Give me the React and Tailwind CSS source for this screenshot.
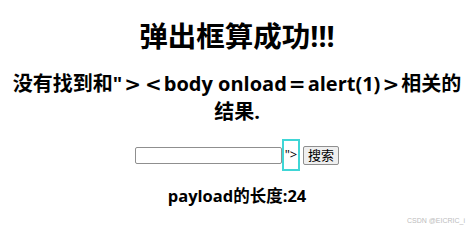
const Sym = ({ children }) => (
  <span className="px-[2px]" style={{ fontFamily: '"DejaVu Sans", sans-serif' }}>
    {children}
  </span>
);

export default function App() {
  const font = { fontFamily: '"Open Sans", "Noto Sans CJK SC", sans-serif' };
  return (
    <div className="w-[474px] h-[230px] bg-white text-black relative overflow-hidden" style={font}>
      <div className="flex flex-col items-center">
        <h1 className="mt-[17px] text-[28.5px] leading-[38px] font-bold">弹出框算成功!!!</h1>
        <h2 className="mt-[15px] w-[474px] text-[20px] leading-[27px] font-bold text-center whitespace-nowrap">
          没有找到和"<Sym>&gt;</Sym><Sym>&lt;</Sym>body onload<Sym>=</Sym>alert(1)<Sym>&gt;</Sym>相关的
          <br />
          结果.
        </h2>
        <div className="mt-[14px] flex items-center">
          <input
            type="text"
            className="w-[147px] h-[17px] border border-[#8f8f8f] rounded-[2px] bg-white"
          />
          <div className="w-[18px] h-[32px] border-2 border-[#3fd6d6] flex items-center justify-center text-[13px]">
            "&gt;
          </div>
          <button className="ml-[3px] w-[36px] h-[19px] border border-[#8f8f8f] rounded-[2px] bg-[#efefef] text-[13px] leading-none">
            搜索
          </button>
        </div>
        <h3 className="mt-[14px] text-[16.5px] leading-[22px] font-bold">payload的长度:24</h3>
      </div>
      <div
        className="absolute right-[9px] bottom-[6px] text-[7px] leading-none text-[#bdbdbd]"
        style={{ fontFamily: '"Liberation Sans", sans-serif' }}
      >
        CSDN @EICRIC_i
      </div>
    </div>
  );
}
